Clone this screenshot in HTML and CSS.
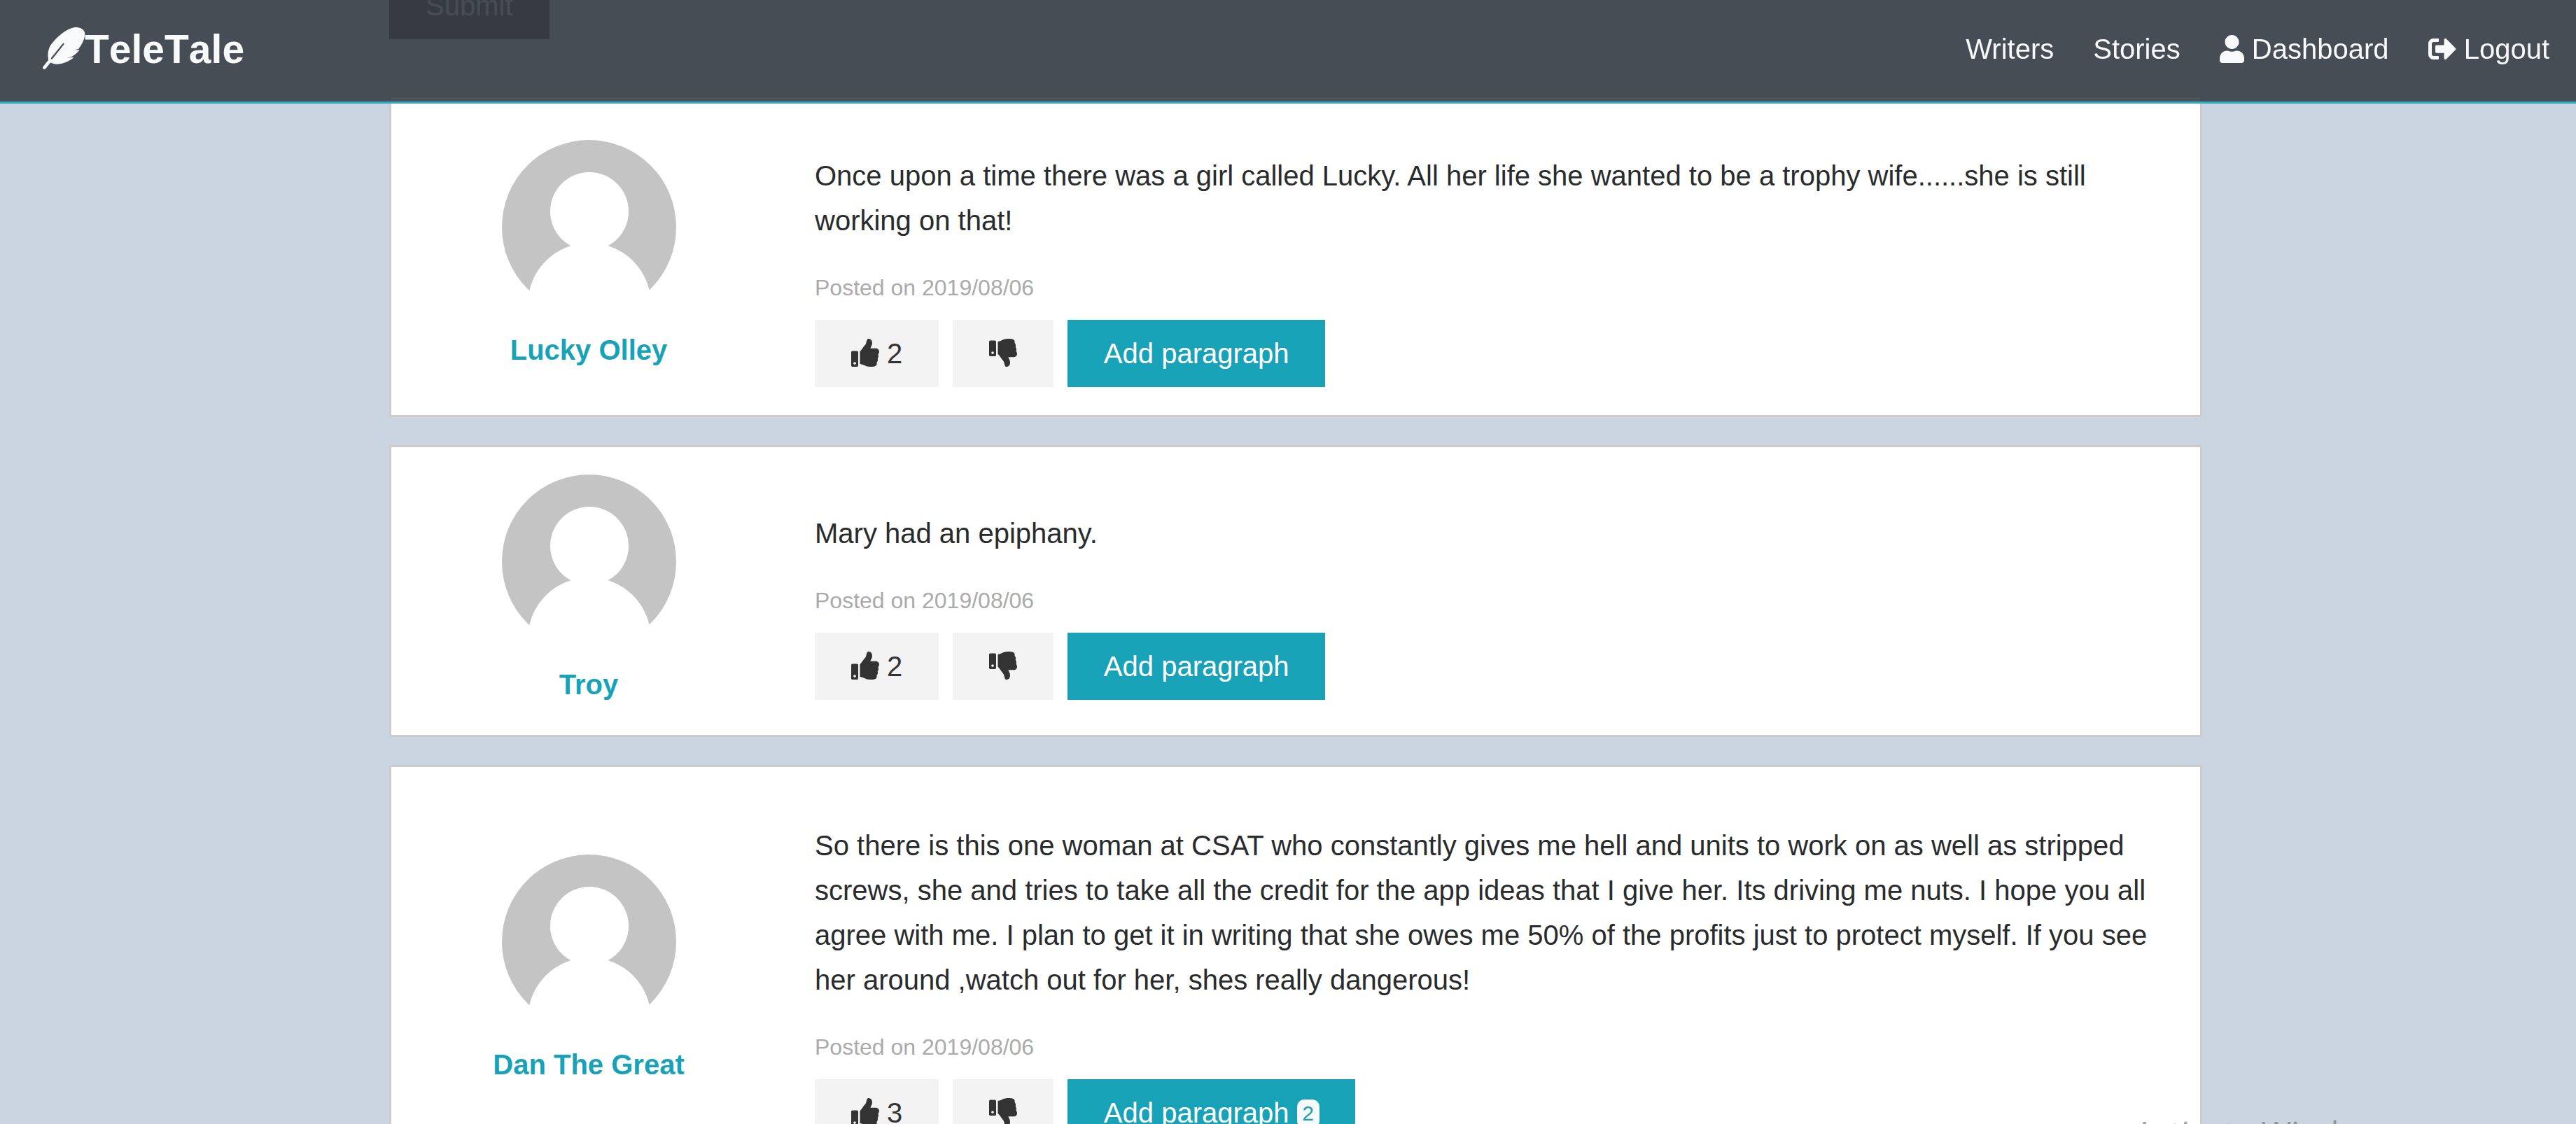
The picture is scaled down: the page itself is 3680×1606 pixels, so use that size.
FILE: index.html
```html
<!DOCTYPE html>
<html lang="en">
<head>
<meta charset="utf-8">
<title>TeleTale</title>
<link rel="stylesheet" href="styles.css">
</head>
<body>
<svg class="defs" width="0" height="0" aria-hidden="true">
  <symbol id="up" viewBox="0 0 512 512"><path d="M104 224H24c-13.255 0-24 10.745-24 24v240c0 13.255 10.745 24 24 24h80c13.255 0 24-10.745 24-24V248c0-13.255-10.745-24-24-24zM64 472c-13.255 0-24-10.745-24-24s10.745-24 24-24 24 10.745 24 24-10.745 24-24 24zM384 81.452c0 42.416-25.97 66.208-33.277 94.548h101.723c33.397 0 59.397 27.746 59.553 58.098.084 17.938-7.546 37.249-19.439 49.197l-.11.11c9.836 23.337 8.237 56.037-9.308 79.469 8.681 25.895-.069 57.704-16.382 74.757 4.298 17.598 2.244 32.575-6.148 44.632C440.202 511.587 389.616 512 346.839 512l-2.845-.001c-48.287-.017-87.806-17.598-119.56-31.725-15.957-7.099-36.821-15.887-52.651-16.178-6.54-.12-11.783-5.457-11.783-11.998v-213.77c0-3.2 1.282-6.271 3.558-8.521 39.614-39.144 56.648-80.587 89.117-113.111 14.804-14.832 20.188-37.236 25.393-58.902C282.515 39.293 291.817 0 312 0c24 0 72 8 72 81.452z"/></symbol>
  <symbol id="down" viewBox="0 0 512 512"><path d="M0 56v240c0 13.255 10.745 24 24 24h80c13.255 0 24-10.745 24-24V56c0-13.255-10.745-24-24-24H24C10.745 32 0 42.745 0 56zm40 200c0-13.255 10.745-24 24-24s24 10.745 24 24-10.745 24-24 24-24-10.745-24-24zm272 256c-20.183 0-29.485-39.293-33.931-57.795-5.206-21.666-10.589-44.07-25.393-58.902-32.469-32.524-49.503-73.967-89.117-113.111a11.98 11.98 0 0 1-3.558-8.521V59.901c0-6.541 5.243-11.878 11.783-11.998 15.831-.29 36.694-9.079 52.651-16.178C256.189 17.598 295.709.017 343.995 0h2.844c42.777 0 93.363.413 113.774 29.737 8.392 12.057 10.446 27.034 6.148 44.632 16.312 17.053 25.063 48.863 16.382 74.757 17.544 23.432 19.143 56.132 9.308 79.469l.11.11c11.893 11.949 19.523 31.259 19.439 49.197-.156 30.352-26.157 58.098-59.553 58.098H350.723C358.03 364.34 384 388.132 384 430.548 384 504 336 512 312 512z"/></symbol>
  <symbol id="avatar" viewBox="0 0 249 249"><circle cx="124.5" cy="124.5" r="124.5" fill="#c4c4c4"/><circle cx="125" cy="102" r="56" fill="#fff"/><circle cx="125" cy="235" r="88" fill="#fff"/></symbol>
</svg>

<header class="navbar">
  <a class="brand">
    <svg class="feather" viewBox="55 45 190 190"><path class="feather-body" d="M88 196C80 170 82 140 102 116C128 86 160 56 196 49C222 45 242 58 243 76C243 96 232 118 216 141L200 145L220 146C210 158 198 168 184 176L163 179L196 178C176 194 150 206 126 207C112 208 100 204 88 196Z"/><path class="feather-tail" d="M68 222L150 120"/><path class="feather-slit" d="M100 182L150 120"/></svg>
    <span class="brand-name">TeleTale</span>
  </a>
  <nav class="links">
    <a class="link">Writers</a>
    <a class="link">Stories</a>
    <a class="link"><svg class="nav-icon user" viewBox="0 0 448 512"><path d="M224 256c70.7 0 128-57.3 128-128S294.7 0 224 0 96 57.3 96 128s57.3 128 128 128zm89.6 32h-16.7c-22.2 10.2-46.9 16-72.9 16s-50.6-5.8-72.9-16h-16.7C60.2 288 0 348.2 0 422.4V464c0 26.5 21.5 48 48 48h352c26.5 0 48-21.5 48-48v-41.6c0-74.2-60.2-134.4-134.4-134.4z"/></svg> Dashboard</a>
    <a class="link"><svg class="nav-icon logout" viewBox="0 0 512 512"><path d="M497 273L329 441c-15 15-41 4.5-41-17v-96H152c-13.3 0-24-10.7-24-24v-96c0-13.3 10.7-24 24-24h136V88c0-21.4 25.9-32 41-17l168 168c9.3 9.4 9.3 24.6 0 34zM192 436v-40c0-6.6-5.4-12-12-12H96c-17.7 0-32-14.3-32-32V160c0-17.7 14.3-32 32-32h84c6.6 0 12-5.4 12-12V76c0-6.6-5.4-12-12-12H96c-53 0-96 43-96 96v192c0 53 43 96 96 96h84c6.6 0 12-5.4 12-12z"/></svg> Logout</a>
  </nav>
</header>

<main class="feed">
  <button class="submit">Submit</button>

  <article class="card">
    <div class="author">
      <svg class="avatar"><use href="#avatar"/></svg>
      <div class="name">Lucky Olley</div>
    </div>
    <div class="post">
      <p class="text">Once upon a time there was a girl called Lucky. All her life she wanted to be a trophy wife......she is still working on that!</p>
      <div class="date">Posted on 2019/08/06</div>
      <div class="actions">
        <button class="btn vote"><svg class="thumb"><use href="#up"/></svg> 2</button>
        <button class="btn vote"><svg class="thumb"><use href="#down"/></svg></button>
        <button class="btn add">Add paragraph</button>
      </div>
    </div>
  </article>

  <article class="card">
    <div class="author">
      <svg class="avatar"><use href="#avatar"/></svg>
      <div class="name">Troy</div>
    </div>
    <div class="post">
      <p class="text">Mary had an epiphany.</p>
      <div class="date">Posted on 2019/08/06</div>
      <div class="actions">
        <button class="btn vote"><svg class="thumb"><use href="#up"/></svg> 2</button>
        <button class="btn vote"><svg class="thumb"><use href="#down"/></svg></button>
        <button class="btn add">Add paragraph</button>
      </div>
    </div>
  </article>

  <article class="card">
    <div class="author">
      <svg class="avatar"><use href="#avatar"/></svg>
      <div class="name">Dan The Great</div>
    </div>
    <div class="post">
      <p class="text">So there is this one woman at CSAT who constantly gives me hell and units to work on as well as stripped screws, she and tries to take all the credit for the app ideas that I give her. Its driving me nuts. I hope you all agree with me. I plan to get it in writing that she owes me 50% of the profits just to protect myself. If you see her around ,watch out for her, shes really dangerous!</p>
      <div class="date">Posted on 2019/08/06</div>
      <div class="actions">
        <button class="btn vote"><svg class="thumb"><use href="#up"/></svg> 3</button>
        <button class="btn vote"><svg class="thumb"><use href="#down"/></svg></button>
        <button class="btn add">Add paragraph <span class="badge">2</span></button>
      </div>
    </div>
  </article>
</main>

<div class="watermark">Activate Windows</div>
</body>
</html>
```

FILE: styles.css
```css
* { box-sizing: border-box; }

html, body {
  height: 100%;
  margin: 0;
  overflow: hidden;
}

body {
  background: #cad5e1;
  color: #292b2c;
  font-family: "Liberation Sans", Arial, sans-serif;
  font-size: 40px;
  line-height: 64px;
}

.defs { position: absolute; }

.navbar {
  position: fixed;
  top: 0;
  left: 0;
  right: 0;
  z-index: 10;
  height: 148px;
  padding: 0 8px 6px 59px;
  display: flex;
  align-items: center;
  justify-content: space-between;
  background: rgba(52, 58, 64, 0.88);
  border-bottom: 3px solid #2fa9c1;
  color: #f8f9fa;
}

.brand {
  display: flex;
  align-items: center;
  font-size: 57px;
  font-kerning: none;
  font-weight: 700;
  line-height: 64px;
}

.brand-name { margin-left: -1px; }

.feather {
  width: 63px;
  height: 63px;
  overflow: visible;
}
.feather-body { fill: #f8f9fa; }
.feather-tail { stroke: #f8f9fa; stroke-width: 14; stroke-linecap: round; fill: none; }
.feather-slit { stroke: #454b52; stroke-width: 7; stroke-linecap: round; fill: none; }

.links { display: flex; }

.link {
  padding: 0 28px;
  display: flex;
  align-items: center;
  white-space: pre;
}
.link:last-child { padding-right: 30px; }

.nav-icon { fill: #f8f9fa; height: 40px; }
.nav-icon.user { width: 35px; }
.nav-icon.logout { width: 40px; }

.feed {
  width: 3146px;
  margin-top: -40px;
  padding-left: 556px;
}

.submit {
  display: block;
  height: 96px;
  padding: 0 52px;
  border: 0;
  margin-bottom: 80px;
  background: #44405a;
  color: #cad5e1;
  font: inherit;
}

.card {
  display: flex;
  align-items: center;
  margin-bottom: 40px;
  background: #fff;
  border: 3px solid #ccc;
}

.author {
  width: 564px;
  flex: none;
  height: 411px;
  padding-top: 39px;
  display: flex;
  flex-direction: column;
  align-items: center;
}

.avatar { width: 249px; height: 249px; flex: none; }

.name {
  margin-top: 27px;
  color: #18a2b8;
  font-size: 40px;
  font-weight: 700;
  line-height: 48px;
}

.post {
  flex: 1;
  padding: 80px 40px 40px 41px;
}

.text { margin: 0; }

.date {
  margin: 40px 0 22px;
  color: #aaa;
  font-size: 32px;
  line-height: 48px;
}

.actions { display: flex; gap: 20px; }

.btn {
  height: 96px;
  padding: 0 52px;
  border: 0;
  display: block;
  font: inherit;
  white-space: pre;
}

.vote { background: #f3f3f3; color: #333; }
.add { padding: 0 51.5px; background: #18a2b8; color: #fff; }

.thumb {
  width: 40px;
  height: 40px;
  fill: #333;
  vertical-align: -5px;
}

.badge {
  display: inline-block;
  width: 32px;
  height: 40px;
  border-radius: 10px;
  background: #f8f9fa;
  color: #18a2b8;
  font-size: 30px;
  line-height: 40px;
  text-align: center;
  vertical-align: 3px;
}

.watermark {
  position: fixed;
  left: 3049px;
  top: 1587px;
  z-index: 20;
  color: rgba(105, 105, 105, 0.6);
  font-family: "Open Sans", sans-serif;
  font-size: 46px;
  line-height: 62px;
  white-space: nowrap;
}
```
